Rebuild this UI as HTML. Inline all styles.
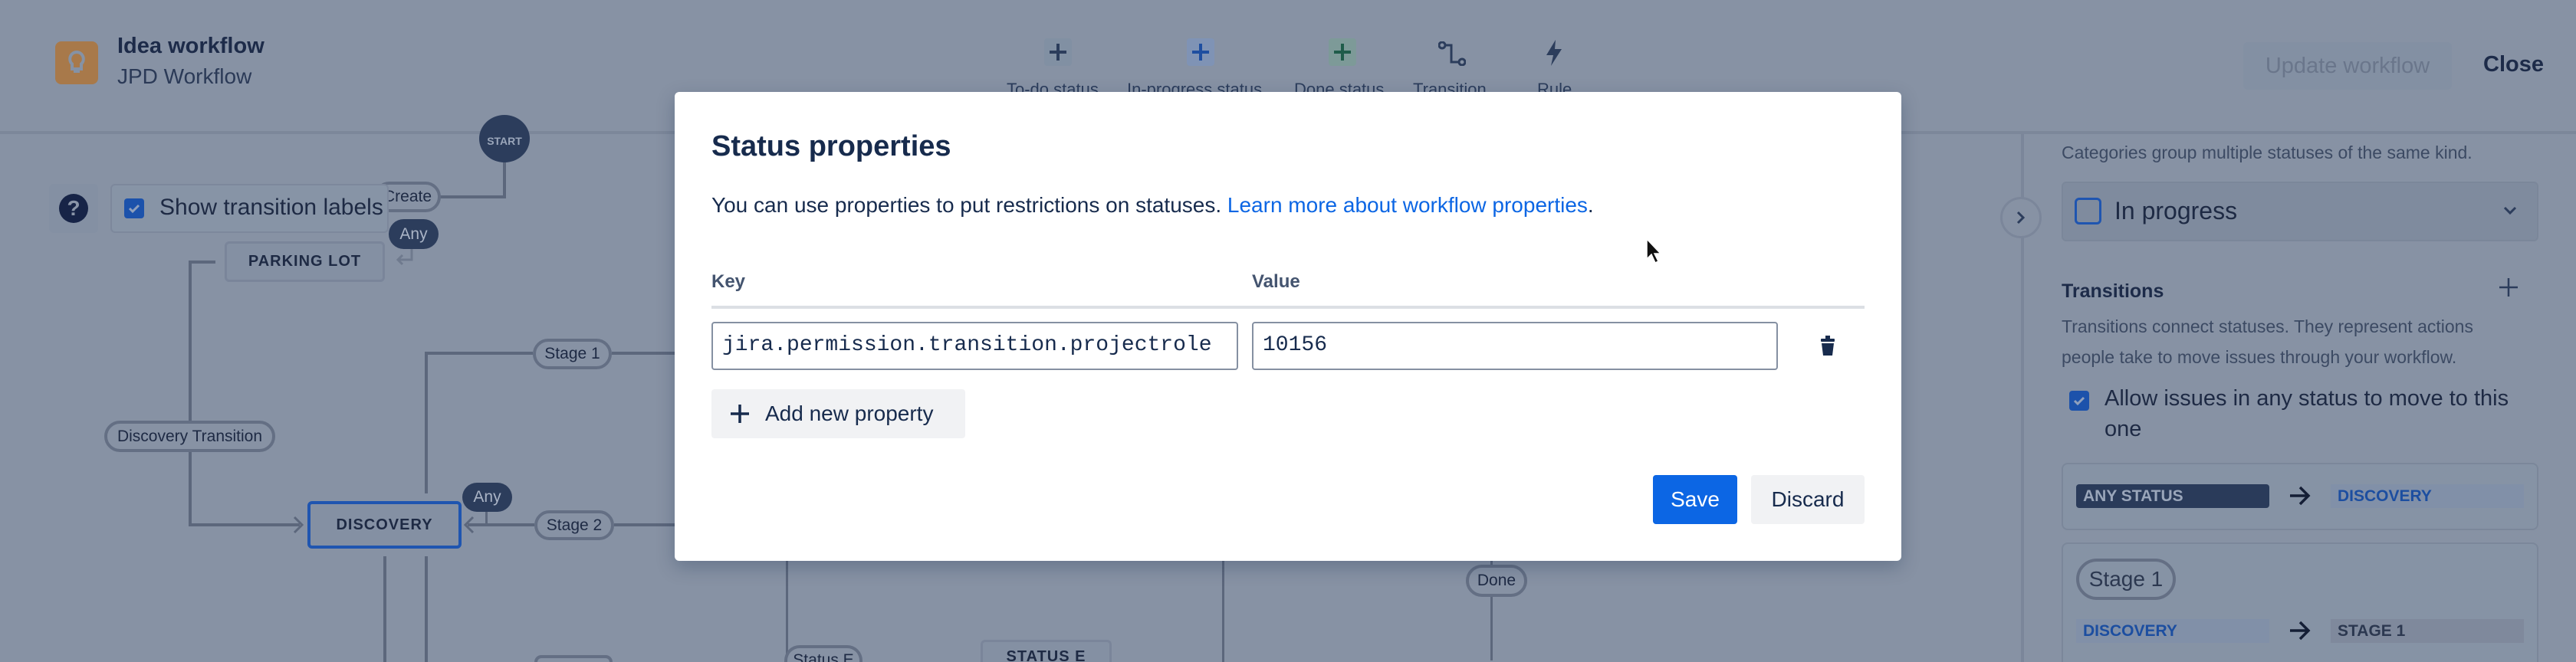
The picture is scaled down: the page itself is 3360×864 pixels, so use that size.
<!DOCTYPE html>
<html><head><meta charset="utf-8"><style>
*{box-sizing:border-box;margin:0;padding:0}
html,body{width:3360px;height:864px;overflow:hidden}
body{background:#8792a4;font-family:"Liberation Sans",sans-serif;position:relative;color:#1d2b49}
.a{position:absolute}
.pill{position:absolute;border:4px solid #646f84;border-radius:40px;display:flex;align-items:center;justify-content:center;font-size:21px;color:#1e2a44;background:#8792a4}
.dark{background:#2c3d5c;border:none;color:#aab4c6}
.ln{position:absolute;background:#5c677c}
.box{position:absolute;border:3px solid #7a859a;border-radius:6px;display:flex;align-items:center;justify-content:center;font-weight:bold;font-size:20px;letter-spacing:1px;background:#8490a3}
.t{position:absolute;white-space:nowrap}
</style></head><body>
<!-- header -->
<div class="a" style="left:0;top:171px;width:3360px;height:4px;background:#7c879a"></div>
<div class="a" style="left:72px;top:54px;width:56px;height:56px;border-radius:8px;background:#a8794a"></div>
<svg class="a" style="left:84px;top:64px" width="32" height="36" viewBox="0 0 32 36"><path d="M16 4a9 9 0 0 0-6 15.5V26h12v-6.5A9 9 0 0 0 16 4z" fill="none" stroke="#8592a5" stroke-width="4"/><rect x="12" y="27" width="8" height="4" fill="#8592a5"/></svg>
<div class="t" style="left:153px;top:44px;font-size:29px;font-weight:bold">Idea workflow</div>
<div class="t" style="left:153px;top:84px;font-size:28px;color:#2b3a57">JPD Workflow</div>
<!-- toolbar -->
<div class="a" style="left:1362px;top:50px;width:36px;height:36px;border-radius:4px;background:#8190a3"></div>
<div class="a" style="left:1548px;top:50px;width:36px;height:36px;border-radius:4px;background:#7f93b5"></div>
<div class="a" style="left:1733px;top:50px;width:36px;height:36px;border-radius:4px;background:#7d9a98"></div>
<svg class="a" style="left:1366px;top:54px" width="28" height="28"><path d="M14 3v22M3 14h22" stroke="#2c3d5c" stroke-width="4"/></svg>
<svg class="a" style="left:1552px;top:54px" width="28" height="28"><path d="M14 3v22M3 14h22" stroke="#1e4ea0" stroke-width="4"/></svg>
<svg class="a" style="left:1737px;top:54px" width="28" height="28"><path d="M14 3v22M3 14h22" stroke="#1f5c4a" stroke-width="4"/></svg>
<svg class="a" style="left:1876px;top:54px" width="36" height="32"><circle cx="5" cy="5" r="4" fill="none" stroke="#2c3d5c" stroke-width="3"/><circle cx="31" cy="27" r="4" fill="none" stroke="#2c3d5c" stroke-width="3"/><path d="M9 5h8v22h10" fill="none" stroke="#2c3d5c" stroke-width="3"/></svg>
<svg class="a" style="left:2015px;top:52px" width="24" height="34"><path d="M14 0L2 20h9l-3 14 14-22h-9z" fill="#2c3d5c"/></svg>
<div class="t" style="left:1313px;top:104px;font-size:22px;color:#2c3d5c">To-do status</div>
<div class="t" style="left:1470px;top:104px;font-size:22px;color:#2c3d5c">In-progress status</div>
<div class="t" style="left:1688px;top:104px;font-size:22px;color:#2c3d5c">Done status</div>
<div class="t" style="left:1843px;top:104px;font-size:22px;color:#2c3d5c">Transition</div>
<div class="t" style="left:2005px;top:104px;font-size:22px;color:#2c3d5c">Rule</div>
<div class="a" style="left:2926px;top:55px;width:272px;height:62px;border-radius:6px;background:#8390a3;color:#6a768b;font-size:29px;display:flex;align-items:center;justify-content:center">Update workflow</div>
<div class="t" style="left:3239px;top:68px;font-size:29px;font-weight:bold;color:#1d2b49">Close</div>
<!-- diagram -->
<div class="ln" style="left:656px;top:173px;width:4px;height:86px"></div>
<div class="ln" style="left:570px;top:255px;width:90px;height:4px"></div>
<div class="a" style="left:625px;top:150px;width:66px;height:62px;border-radius:50%;background:#2c3d5c;color:#9aa6ba;font-size:14px;font-weight:bold;text-align:center;padding-top:26px">START</div>
<div class="pill" style="left:488px;top:237px;width:87px;height:40px">Create</div>
<div class="pill dark" style="left:507px;top:286px;width:65px;height:39px">Any</div>
<svg class="a" style="left:515px;top:325px" width="30" height="30"><path d="M22 0v14H4m6-6l-6 6 6 6" fill="none" stroke="#6f7a8e" stroke-width="3"/></svg>
<div class="box" style="left:293px;top:315px;width:209px;height:53px;color:#1e2a44">PARKING LOT</div>
<div class="ln" style="left:246px;top:340px;width:35px;height:4px"></div>
<div class="ln" style="left:246px;top:340px;width:4px;height:347px"></div>
<div class="ln" style="left:246px;top:683px;width:145px;height:4px"></div>
<svg class="a" style="left:380px;top:673px" width="16" height="24"><path d="M4 2l10 10-10 10" fill="none" stroke="#5c677c" stroke-width="3"/></svg>
<div class="pill" style="left:136px;top:549px;width:223px;height:41px">Discovery Transition</div>
<div class="box" style="left:401px;top:654px;width:201px;height:62px;border:4px solid #1f55b0;color:#1e2a44">DISCOVERY</div>
<div class="pill dark" style="left:603px;top:630px;width:65px;height:38px">Any</div>
<div class="ln" style="left:633px;top:668px;width:3px;height:17px"></div>
<div class="ln" style="left:610px;top:683px;width:87px;height:4px"></div>
<svg class="a" style="left:605px;top:673px" width="16" height="24"><path d="M12 2L2 12l10 10" fill="none" stroke="#5c677c" stroke-width="3"/></svg>
<div class="pill" style="left:697px;top:666px;width:104px;height:39px">Stage 2</div>
<div class="ln" style="left:801px;top:683px;width:80px;height:4px"></div>
<div class="ln" style="left:554px;top:459px;width:141px;height:4px"></div>
<div class="ln" style="left:554px;top:459px;width:4px;height:185px"></div>
<div class="pill" style="left:695px;top:442px;width:103px;height:40px">Stage 1</div>
<div class="ln" style="left:798px;top:459px;width:82px;height:4px"></div>
<div class="ln" style="left:554px;top:726px;width:4px;height:138px"></div>
<div class="ln" style="left:500px;top:726px;width:4px;height:138px"></div>
<div class="pill" style="left:697px;top:855px;width:102px;height:9px;border-bottom:none;border-radius:40px 40px 0 0"></div>
<div class="ln" style="left:1025px;top:732px;width:3px;height:132px"></div>
<div class="ln" style="left:1594px;top:732px;width:3px;height:132px"></div>
<div class="pill" style="left:1023px;top:842px;width:102px;height:22px;border-bottom:none;border-radius:20px 20px 0 0;align-items:flex-start;padding-top:4px;overflow:hidden">Status E</div>
<div class="box" style="left:1279px;top:835px;width:171px;height:29px;border-bottom:none;border-radius:6px 6px 0 0;align-items:flex-start;padding-top:8px;color:#1e2a44;overflow:hidden">STATUS E</div>
<div class="ln" style="left:1944px;top:732px;width:3px;height:130px"></div>
<div class="pill" style="left:1912px;top:737px;width:80px;height:42px">Done</div>
<!-- help / toggle -->
<div class="a" style="left:64px;top:240px;width:64px;height:64px;border-radius:6px;background:#8490a3"></div>
<div class="a" style="left:77px;top:253px;width:38px;height:38px;border-radius:50%;background:#172447;color:#8a95a8;font-weight:bold;font-size:28px;text-align:center;line-height:38px">?</div>
<div class="a" style="left:144px;top:240px;width:363px;height:64px;border-radius:6px;background:#8794a6;border:2px solid #7d889c"></div>
<div class="a" style="left:162px;top:259px;width:26px;height:26px;border-radius:4px;background:#1c52ab"></div>
<svg class="a" style="left:165px;top:262px" width="20" height="20"><path d="M4 10l4 4 8-8" fill="none" stroke="#8fa0bd" stroke-width="3"/></svg>
<div class="t" style="left:208px;top:254px;font-size:30px;color:#1e2a44">Show transition labels</div>
<!-- right panel -->
<div class="a" style="left:2636px;top:175px;width:4px;height:689px;background:#7b869a"></div>
<div class="a" style="left:2609px;top:257px;width:54px;height:54px;border-radius:50%;border:3px solid #7b869a;background:#8792a4"></div>
<svg class="a" style="left:2628px;top:275px" width="16" height="18"><path d="M4 2l7 7-7 7" fill="none" stroke="#2c3d5c" stroke-width="3"/></svg>
<div class="t" style="left:2689px;top:186px;font-size:23px;color:#3c4a63">Categories group multiple statuses of the same kind.</div>
<div class="a" style="left:2689px;top:237px;width:622px;height:78px;border-radius:6px;background:#7f8b9e;border:2px solid #7b879a"></div>
<div class="a" style="left:2706px;top:258px;width:35px;height:35px;border-radius:6px;border:3px solid #1f55b0"></div>
<div class="t" style="left:2758px;top:257px;font-size:32px;color:#1e2a44">In progress</div>
<svg class="a" style="left:3264px;top:268px" width="20" height="14"><path d="M3 3l7 7 7-7" fill="none" stroke="#2c3d5c" stroke-width="3"/></svg>
<div class="t" style="left:2689px;top:366px;font-size:25px;font-weight:bold">Transitions</div>
<svg class="a" style="left:3259px;top:362px" width="26" height="26"><path d="M13 1v24M1 13h24" stroke="#2c3d5c" stroke-width="2.5"/></svg>
<div class="t" style="left:2689px;top:406px;font-size:23px;color:#3c4a63;line-height:40px">Transitions connect statuses. They represent actions<br>people take to move issues through your workflow.</div>
<div class="a" style="left:2699px;top:510px;width:26px;height:26px;border-radius:4px;background:#1c52ab"></div>
<svg class="a" style="left:2702px;top:513px" width="20" height="20"><path d="M4 10l4 4 8-8" fill="none" stroke="#8fa0bd" stroke-width="3"/></svg>
<div class="t" style="left:2745px;top:500px;font-size:29px;line-height:40px;color:#1e2a44">Allow issues in any status to move to this<br>one</div>
<div class="a" style="left:2689px;top:604px;width:622px;height:88px;border-radius:8px;border:2px solid #7b879a;background:#8693a5"></div>
<div class="a" style="left:2708px;top:632px;width:252px;height:31px;border-radius:4px;background:#2a3b5a;color:#9aa6ba;font-weight:bold;font-size:21px;padding:4px 9px">ANY STATUS</div>
<svg class="a" style="left:2985px;top:633px" width="30" height="28"><path d="M2 14h24M15 3l11 11-11 11" fill="none" stroke="#141e35" stroke-width="3.5"/></svg>
<div class="a" style="left:3040px;top:632px;width:252px;height:31px;background:#8190a8;color:#1c4ea0;font-weight:bold;font-size:21px;padding:4px 9px">DISCOVERY</div>
<div class="a" style="left:2689px;top:708px;width:622px;height:170px;border-radius:8px;border:2px solid #7b879a;background:#8693a5"></div>
<div class="pill" style="left:2708px;top:729px;width:130px;height:54px;font-size:28px;color:#2c3850;background:#8693a5">Stage 1</div>
<div class="a" style="left:2708px;top:808px;width:252px;height:31px;background:#8190a8;color:#1c4ea0;font-weight:bold;font-size:21px;padding:4px 9px">DISCOVERY</div>
<svg class="a" style="left:2985px;top:809px" width="30" height="28"><path d="M2 14h24M15 3l11 11-11 11" fill="none" stroke="#141e35" stroke-width="3.5"/></svg>
<div class="a" style="left:3040px;top:808px;width:252px;height:31px;background:#7f899c;color:#2c3850;font-weight:bold;font-size:21px;padding:4px 9px">STAGE 1</div>
<!-- modal -->
<div class="a" style="left:880px;top:120px;width:1600px;height:612px;background:#fff;border-radius:6px;box-shadow:0 8px 24px rgba(9,30,66,.25)"></div>
<div class="t" style="left:928px;top:170px;font-size:38px;font-weight:bold;color:#172b4d">Status properties</div>
<div class="t" style="left:928px;top:252px;font-size:28px;color:#172b4d">You can use properties to put restrictions on statuses. <span style="color:#0c66e4">Learn more about workflow properties</span>.</div>
<svg class="a" style="left:2146px;top:310px" width="24" height="36"><path d="M2 2v26l6-6 5 11 4-2-5-10h8z" fill="#111" stroke="#fff" stroke-width="1.5"/></svg>
<div class="t" style="left:928px;top:354px;font-size:24px;font-weight:bold;color:#44546f">Key</div>
<div class="t" style="left:1633px;top:354px;font-size:24px;font-weight:bold;color:#44546f">Value</div>
<div class="a" style="left:928px;top:399px;width:1504px;height:4px;background:#dcdfe4"></div>
<div class="a" style="left:928px;top:420px;width:687px;height:63px;border:2px solid #8590a2;border-radius:4px;font-family:'Liberation Mono',monospace;font-size:28px;padding:13px 12px;color:#172b4d;white-space:nowrap;overflow:hidden">jira.permission.transition.projectrole</div>
<div class="a" style="left:1633px;top:420px;width:686px;height:63px;border:2px solid #8590a2;border-radius:4px;font-family:'Liberation Mono',monospace;font-size:28px;padding:13px 12px;color:#172b4d">10156</div>
<svg class="a" style="left:2373px;top:438px" width="22" height="28"><rect x="8" y="0" width="6" height="4" fill="#172b4d"/><rect x="2" y="4" width="18" height="4" rx="1" fill="#172b4d"/><path d="M3 10h16l-2 16H5z" fill="#172b4d"/></svg>
<div class="a" style="left:928px;top:508px;width:331px;height:64px;border-radius:4px;background:#f1f2f4;font-size:28px;color:#172b4d;display:flex;align-items:center;padding-left:24px"><svg width="26" height="26" style="margin-right:20px"><path d="M13 1v24M1 13h24" stroke="#172b4d" stroke-width="3.5"/></svg>Add new property</div>
<div class="a" style="left:2156px;top:620px;width:110px;height:64px;border-radius:4px;background:#0c66e4;color:#fff;font-size:28px;display:flex;align-items:center;justify-content:center">Save</div>
<div class="a" style="left:2284px;top:620px;width:148px;height:64px;border-radius:4px;background:#f1f2f4;color:#172b4d;font-size:28px;display:flex;align-items:center;justify-content:center">Discard</div>
</body></html>
